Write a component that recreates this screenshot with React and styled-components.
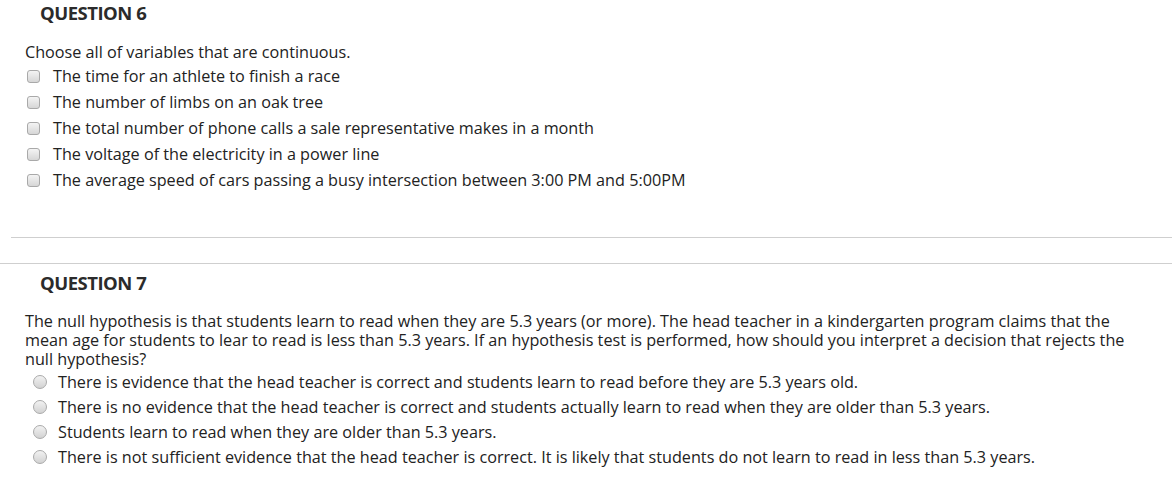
import React from "react";
import styled, { createGlobalStyle } from "styled-components";

const GlobalStyle = createGlobalStyle`
  body {
    margin: 0;
    background: #fff;
    font-family: "Open Sans", "Liberation Sans", sans-serif;
    color: #333;
  }
`;

const Page = styled.div`
  width: 1172px;
  height: 497px;
  overflow: hidden;
`;

const Heading = styled.h3`
  margin: 0;
  padding-left: 40px;
  font-size: 18.5px;
  font-weight: 700;
  letter-spacing: -0.5px;
  line-height: 24px;
  color: #2b2b2b;
`;

const QuestionBody = styled.div`
  padding-left: 25px;
  padding-right: ${(p) => p.$right || 0}px;
`;

const Prompt = styled.p`
  margin: 0;
  font-size: 16.2px;
  line-height: ${(p) => p.$line}px;
  color: #222;
`;

const OptionList = styled.div`
  display: flex;
  flex-direction: column;
`;

const Option = styled.label`
  display: flex;
  align-items: center;
  height: ${(p) => p.$h}px;
  padding-left: ${(p) => p.$indent}px;
  font-size: 16.2px;
  color: #222;
  white-space: nowrap;
`;

const Checkbox = styled.span`
  width: 13px;
  height: 13px;
  box-sizing: border-box;
  border: 1px solid #a9a9a9;
  border-radius: 3px;
  background: linear-gradient(#f4f4f4, #d6d6d6);
  margin-right: 13px;
  flex-shrink: 0;
`;

const Radio = styled.span`
  width: 14px;
  height: 14px;
  box-sizing: border-box;
  border: 1px solid #aaa;
  border-radius: 50%;
  background: linear-gradient(#f2f2f2, #d2d2d2);
  margin-right: 11px;
  flex-shrink: 0;
`;

const Rule = styled.hr`
  margin: 0;
  margin-left: ${(p) => p.$left || 0}px;
  border: 0;
  border-top: 1px solid #cfcfcf;
`;

const Section = styled.section`
  padding-top: ${(p) => p.$top}px;
`;

const Gap = styled.div`
  height: ${(p) => p.$h}px;
`;

const q6 = [
  "The time for an athlete to finish a race",
  "The number of limbs on an oak tree",
  "The total number of phone calls a sale representative makes in a month",
  "The voltage of the electricity in a power line",
  "The average speed of cars passing a busy intersection between 3:00 PM and 5:00PM",
];

const q7 = [
  "There is evidence that the head teacher is correct and students learn to read before they are 5.3 years old.",
  "There is no evidence that the head teacher is correct and students actually learn to read when they are older than 5.3 years.",
  "Students learn to read when they are older than 5.3 years.",
  "There is not sufficient evidence that the head teacher is correct. It is likely that students do not learn to read in less than 5.3 years.",
];

export default function App() {
  return (
    <Page>
      <GlobalStyle />
      <Section $top={1}>
        <Heading>QUESTION 6</Heading>
        <Gap $h={17} />
        <QuestionBody>
          <Prompt $line={21}>Choose all of variables that are continuous.</Prompt>
          <OptionList>
            {q6.map((t) => (
              <Option key={t} $h={26} $indent={2}>
                <Checkbox />
                {t}
              </Option>
            ))}
          </OptionList>
        </QuestionBody>
      </Section>
      <Gap $h={44} />
      <Rule $left={11} />
      <Gap $h={25} />
      <Rule />
      <Section $top={7}>
        <Heading>QUESTION 7</Heading>
        <Gap $h={17} />
        <QuestionBody $right={37}>
          <Prompt $line={19}>
            The null hypothesis is that students learn to read when they are 5.3
            years (or more). The head teacher in a kindergarten program claims
            that the mean age for students to lear to read is less than 5.3
            years. If an hypothesis test is performed, how should you interpret a
            decision that rejects the null hypothesis?
          </Prompt>
          <OptionList>
            {q7.map((t) => (
              <Option key={t} $h={25} $indent={8}>
                <Radio />
                {t}
              </Option>
            ))}
          </OptionList>
        </QuestionBody>
      </Section>
    </Page>
  );
}
